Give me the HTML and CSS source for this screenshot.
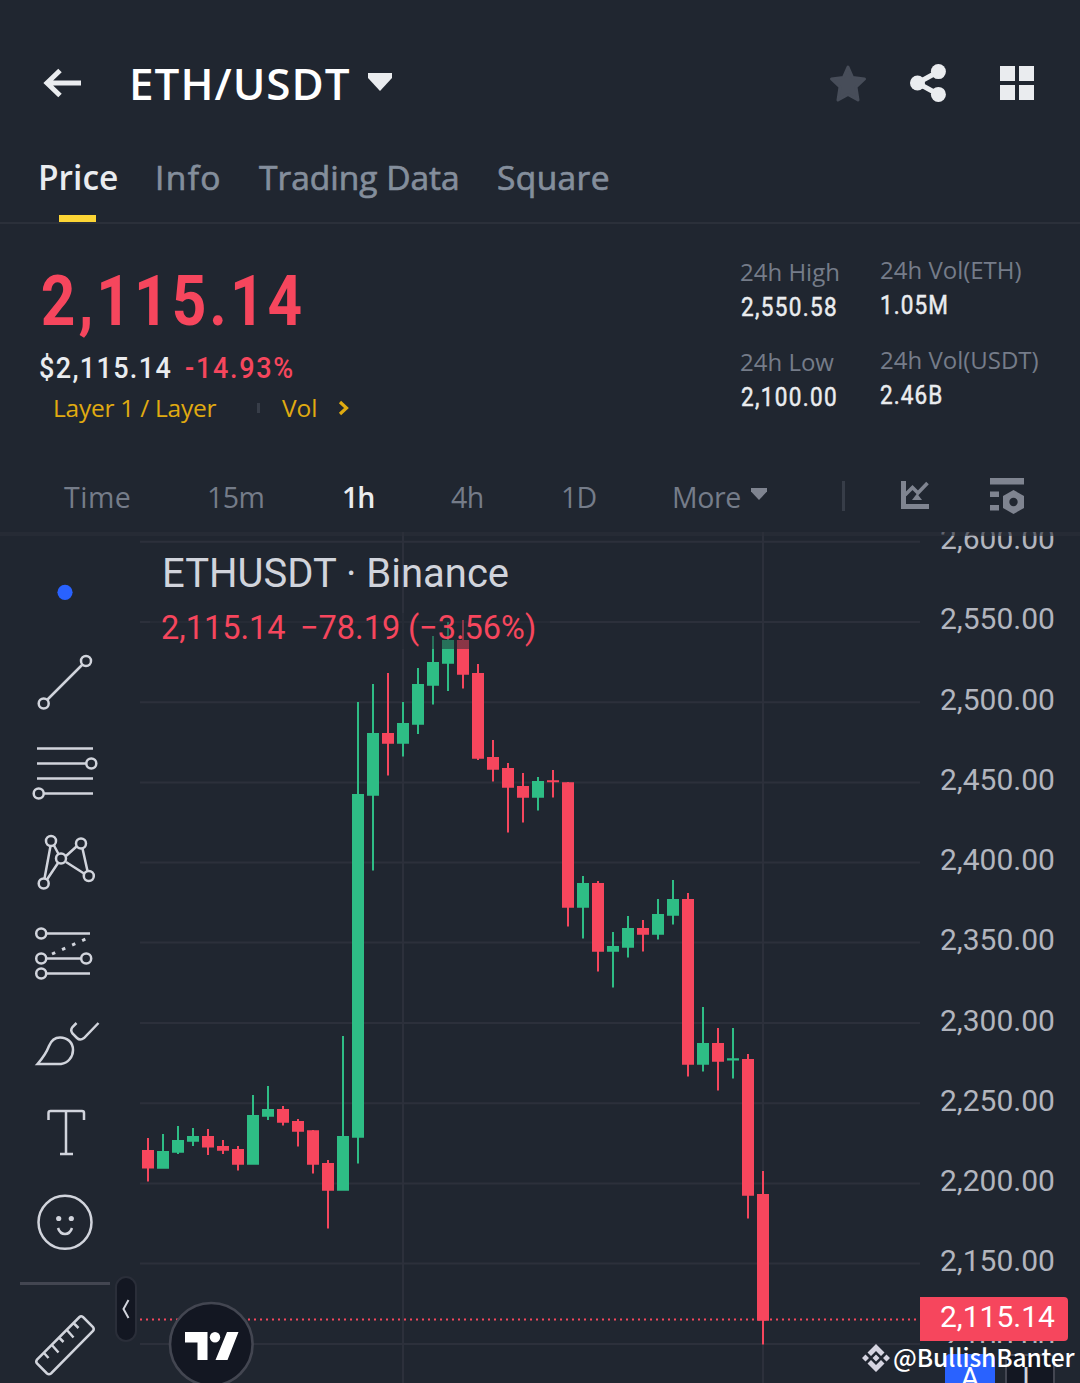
FILE: index.html
```html
<!DOCTYPE html>
<html lang="en">
<head>
<meta charset="utf-8">
<title>ETH/USDT</title>
<link rel="stylesheet" href="styles.css">
</head>
<body>
<div class="screen">
  <header class="topbar">
    <svg class="back" width="40" height="32" viewBox="0 0 40 32"><path d="M38 16H4M17 3.500L4 16L17 28.500" fill="none" stroke="#eaecef" stroke-width="5"/></svg>
    <h1 class="pair">ETH/USDT</h1>
    <svg class="pair-caret" width="24" height="18" viewBox="0 0 24 18"><path d="M0 0H24V5L12 18L0 5Z" fill="#eaecef"/></svg>
    <svg class="star" width="38" height="40" viewBox="0 0 38 40"><path d="M19 3L23.600 13.500L35.500 15L27 23L29 36L19 30.500L9 36L11 23L2.500 15L14.400 13.500Z" fill="#474d59" stroke="#474d59" stroke-width="3" stroke-linejoin="round"/></svg>
    <svg class="share" width="36" height="38" viewBox="0 0 36 38"><path d="M28.500 7.500L7.500 19L28.500 30.500" fill="none" stroke="#eaecef" stroke-width="5"/><g fill="#eaecef"><circle cx="28.400" cy="7.600" r="7.500"/><circle cx="7.500" cy="19" r="7.500"/><circle cx="28.400" cy="30.400" r="7.500"/></g></svg>
    <svg class="grid-icon" width="34" height="34" viewBox="0 0 34 34"><path d="M0 0H15V15H0ZM19 0H34V15H19ZM0 19H15V34H0ZM19 19H34V34H19Z" fill="#eaecef"/></svg>
  </header>

  <nav class="tabs">
    <a class="tab tab-price active">Price</a>
    <a class="tab tab-info">Info</a>
    <a class="tab tab-data">Trading Data</a>
    <a class="tab tab-square">Square</a>
  </nav>

  <section class="summary">
    <div class="quote">
      <div class="last">2,115.14</div>
      <div class="fiat"><span class="usd">$2,115.14</span><span class="change">-14.93%</span></div>
      <div class="tags">
        <span class="tag-layer">Layer 1 / Layer</span><i class="tag-split"></i><span class="tag-vol">Vol</span>
        <svg width="11" height="16" viewBox="0 0 11 16"><path d="M2 2L8.500 8L2 14" fill="none" stroke="#e0ab10" stroke-width="3.200"/></svg>
      </div>
    </div>
    <dl class="stats stats-range">
      <dt class="l-high">24h High</dt><dd>2,550.58</dd>
      <dt class="l-low">24h Low</dt><dd>2,100.00</dd>
    </dl>
    <dl class="stats stats-vol">
      <dt class="l-eth">24h Vol(ETH)</dt><dd>1.05M</dd>
      <dt class="l-usdt">24h Vol(USDT)</dt><dd>2.46B</dd>
    </dl>
  </section>

  <nav class="intervals">
    <span class="iv iv-time">Time</span>
    <span class="iv iv-15">15m</span>
    <span class="iv iv-1h active">1h</span>
    <span class="iv iv-4h">4h</span>
    <span class="iv iv-1d">1D</span>
    <span class="iv iv-more">More</span>
    <svg class="more-caret" width="16" height="12" viewBox="0 0 16 12"><path d="M0 0H16V3.500L8 12L0 3.500Z" fill="#7f8490"/></svg>
    <i class="iv-split"></i>
    <svg class="chart-icon" width="28" height="28" viewBox="0 0 28 28"><path d="M2.500 0V25.500H28" fill="none" stroke="#7f8490" stroke-width="5"/><path d="M4 14L11.500 6.500L17 12L26.500 2" fill="none" stroke="#7f8490" stroke-width="3.600"/><path d="M16 12.500L21 19H11Z" fill="#7f8490"/></svg>
    <svg class="settings-icon" width="36" height="36" viewBox="0 0 36 36"><path d="M1 0H35V6.500H1ZM1 13.500H10V19H1ZM1 27H10V32.500H1Z" fill="#7f8490"/><path d="M24.500 12L35 18V30L24.500 36L14 30V18Z" fill="#7f8490"/><circle cx="24.500" cy="24" r="4.200" fill="#202630"/></svg>
  </nav>

  <main class="chart">
    <aside class="tools">
      <svg class="tool" viewBox="0 547 140 90"><circle cx="65" cy="592.300" r="7.600" fill="#2962ff"/></svg>
      <svg class="tool" viewBox="0 637 140 90"><path d="M47.500 699.500L82.500 664.500"/><circle cx="86" cy="661" r="5"/><circle cx="43.700" cy="703.500" r="5"/></svg>
      <svg class="tool" viewBox="0 727 140 90"><path d="M37 748.500H93M37 763.500H86M37 778.500H93M44 793.500H93"/><circle cx="91.300" cy="763.500" r="5"/><circle cx="38.700" cy="793.500" r="5"/></svg>
      <svg class="tool" viewBox="0 817 140 90"><path d="M50.500 846L44.500 878.500M47 879.500L58 863M54 845.500L58.500 854M66 856L76.500 846.500M66 862L84 873.500M82.500 848.500L87.500 871"/><circle cx="51" cy="841" r="5"/><circle cx="81" cy="843.500" r="5"/><circle cx="61" cy="858.500" r="5"/><circle cx="43.700" cy="883.500" r="5"/><circle cx="88.800" cy="876" r="5"/></svg>
      <svg class="tool" viewBox="0 907 140 90"><path d="M46 933.500H90M46 958.500H81M46 973.500H90"/><path d="M52 954L88 938" stroke-width="3" stroke-dasharray="3.500 7.500"/><circle cx="41.200" cy="933.500" r="5"/><circle cx="41.200" cy="958.500" r="5"/><circle cx="86.200" cy="958.500" r="5"/><circle cx="41.200" cy="973.500" r="5"/></svg>
      <svg class="tool" viewBox="0 997 140 90"><path d="M37.500 1064H61C68 1063 73 1057 73 1050C73 1042 67 1037.500 60 1037.500C54 1037.500 51 1041 49 1046C46 1054 41 1060 37.500 1064ZM76.500 1023L72.500 1027Q70 1030 72.500 1033.500L77 1038Q80 1041 84 1038L98.500 1023"/></svg>
      <svg class="tool" viewBox="0 1087 140 90"><path d="M48.500 1120V1113Q48.500 1111 50.500 1111H82Q84 1111 84 1113V1120M66 1111V1154M60 1154H73"/></svg>
      <svg class="tool" viewBox="0 1177 140 90"><circle cx="65" cy="1222.300" r="26.500"/><path d="M58 1228Q60 1234 65 1234Q70 1234 72 1228"/><circle class="dot" cx="58.700" cy="1218.500" r="2.600"/><circle class="dot" cx="71.300" cy="1218.500" r="2.600"/></svg>
      <i class="tools-rule"></i>
      <svg class="tool tool-last" viewBox="0 1300 140 83"><path d="M79.500 1317L37 1359.500Q35.500 1361.500 37 1363.500L47 1373.500Q49 1375 51 1373.500L93 1331Q94.500 1329 93 1327L83 1317Q81 1315.500 79.500 1317ZM73.500 1323L78.500 1328M66 1329L73.500 1337.500M58.500 1337L63.500 1342M51 1344L58.500 1352.500M44 1353L48.500 1358"/></svg>
    </aside>

    <div class="plot">
      <svg class="candles" width="780" height="851" viewBox="140 532 780 851">
        <path class="grid" d="M140 541.700H920M140 621.900H920M140 702.200H920M140 782.400H920M140 862.600H920M140 942.600H920M140 1023H920M140 1103.300H920M140 1183.500H920M140 1263.500H920M140 1343.900H920"/>
        <path class="grid grid-v" d="M403 532V1383M763 532V1383"/>
        <path class="last-line" d="M140 1319.500H920"/>
        <g class="up">
          <path class="wick" d="M163 1134V1152M178 1126V1154M193 1128V1146M253 1095V1117M268 1086V1120M343 1036V1140M358 702V1163.500M373 684V870.500M403 702V756.500M418 668V734M433 636V704.500M448 622V691M538 777V810.500M583 876V938.500M613 932V987.500M628 916V957.500M658 899V939.500M673 880V924.500M703 1007V1071.500M733 1028V1078.500"/>
          <path class="body" d="M163 1151V1168.700M178 1140V1152.700M193 1136V1141.700M253 1115V1164.700M268 1109V1116.700M343 1136V1190.700M358 794V1137.700M373 733V795.700M403 723V743.700M418 684V724.700M433 662V685.700M448 640V663.700M538 781V797.700M583 883V907.700M613 946V951.700M628 928V947.700M658 914V934.700M673 899V915.700M703 1043V1064.700M733 1058.300V1060.500"/>
        </g>
        <g class="down">
          <path class="wick" d="M148 1138V1181.500M208 1129V1155M223 1140V1154M238 1146V1170.500M283 1106V1125.500M298 1119V1146.500M313 1130V1173.500M328 1160V1228.500M388 673V775.500M463 620V688.500M478 664V760M493 740V781.500M508 763V832.500M523 773V822.500M553 770V797.500M568 782V926.500M598 881V971.500M643 920V951.500M688 893V1076.500M718 1028V1090.500M748 1054V1218.500M763 1171V1344.500"/>
          <path class="body" d="M148 1150V1168.500M208 1136V1147.500M223 1146V1150.700M238 1149V1164.700M283 1109V1122.700M298 1121V1131.700M313 1130.300V1164.700M328 1163V1190.700M388 733V743.700M463 640V674.700M478 673V758.700M493 757V769.700M508 768V787.700M523 786V797.700M553 780.300V782.300M568 782.300V907.700M598 883V951.700M643 928V934.700M688 899V1064.700M718 1043V1061.700M748 1059V1195.700M763 1194V1320.700"/>
        </g>
      </svg>
      <div class="legend">
        <div class="legend-name">ETHUSDT · Binance</div>
        <div class="legend-values"><span class="lv1">2,115.14</span><span class="lv2">−78.19</span><span class="lv3">(−3.56%)</span></div>
      </div>
      <svg class="collapse" width="22" height="66" viewBox="0 0 22 66"><rect x="1" y="1" width="20" height="64" rx="10" fill="#131722" stroke="#2a2e39" stroke-width="2"/><path d="M13.500 24L8.500 33L13.500 42" fill="none" stroke="#d1d4dc" stroke-width="2"/></svg>
      <svg class="tv" width="86" height="86" viewBox="168 1301 86 86"><circle cx="211.300" cy="1344.300" r="41.300" fill="#131722" stroke="#434651" stroke-width="2.600"/><path d="M185 1332H207.500V1360H197.500V1342.500H185ZM227 1332H238.500L227.500 1360H215.500Z" fill="#fff"/><circle cx="215" cy="1337.300" r="5.200" fill="#fff"/></svg>
    </div>

    <div class="axis">
      <div class="axis-labels">
        <span>2,600.00</span><span>2,550.00</span><span>2,500.00</span><span>2,450.00</span><span>2,400.00</span><span>2,350.00</span><span>2,300.00</span><span>2,250.00</span><span>2,200.00</span><span>2,150.00</span><span>2,100.00</span>
      </div>
      <div class="axis-buttons"><b class="btn-auto">A</b><b class="btn-log">L</b></div>
      <div class="last-tag">2,115.14</div>
    </div>
    <div class="watermark">
      <svg width="28" height="28" viewBox="0 0 28 28"><path d="M14 0L22.500 8.500L19 12L14 7L9 12L5.500 8.500ZM14 28L22.500 19.500L19 16L14 21L9 16L5.500 19.500ZM3.500 10.500L7 14L3.500 17.500L0 14ZM24.500 10.500L28 14L24.500 17.500L21 14ZM14 10.500L17.500 14L14 17.500L10.500 14Z" fill="#d5d4e0"/></svg>
      <span>@BullishBanter</span>
    </div>
  </main>
</div>
</body>
</html>
```
FILE: styles.css
```css
* { box-sizing: border-box; margin: 0; padding: 0; }

body {
  background: #202630;
  color: #eaecef;
  font-family: "Open Sans", "Noto Sans", sans-serif;
}

svg { display: block; flex: none; }

.screen {
  width: 1080px;
  height: 1383px;
  overflow: hidden;
  display: flex;
  flex-direction: column;
}

/* Title bar */
.topbar {
  flex: none;
  height: 136px;
  padding: 32px 46px 0 43px;
  display: flex;
  align-items: center;
}
.back { margin-right: 46px; position: relative; top: -1px; }
.pair {
  width: 239px;
  margin-top: -2px;
  font-size: 44px;
  line-height: 60px;
  font-weight: 600;
  letter-spacing: 1px;
  color: #fff;
  white-space: nowrap;
}
.pair-caret { position: relative; top: -2px; }
.star { margin-left: auto; }
.share { margin-left: 43px; position: relative; top: -1px; }
.grid-icon { margin-left: 54px; position: relative; top: -1px; }

/* Section tabs */
.tabs {
  flex: none;
  height: 88px;
  padding-left: 38px;
  display: flex;
  border-bottom: 2px solid #2b303a;
}
.tab {
  position: relative;
  font-size: 33.500px;
  line-height: 46px;
  padding-top: 18px;
  color: #848e9c;
  -webkit-text-stroke: .7px #848e9c;
  white-space: nowrap;
}
.tab.active { color: #eaecef; font-weight: 600; -webkit-text-stroke: 0; }
.tab.active::after {
  content: "";
  position: absolute;
  left: 21px;
  bottom: 0;
  width: 37px;
  height: 7px;
  background: #fcd535;
}
.tab-price { width: 117px; }
.tab-info { width: 104px; letter-spacing: 1.400px; }
.tab-data { width: 238px; }
.tab-square { letter-spacing: .4px; }

/* Price summary */
.summary {
  flex: none;
  height: 239px;
  display: flex;
}
.quote { width: 740px; padding-left: 39px; }
.last {
  width: 320px;
  margin-top: 37px;
  padding-left: 2px;
  font: 700 71px/80px Roboto, sans-serif;
  letter-spacing: 3.600px;
  color: #f6465d;
  transform: scaleX(.85);
  transform-origin: left;
}
.fiat {
  margin-top: 7px;
  display: flex;
  font: 500 30px/40px Roboto, sans-serif;
}
.usd { width: 146px; white-space: nowrap; letter-spacing: 1.500px; transform: scaleX(.9); transform-origin: left; }
.change { color: #f6465d; letter-spacing: 1.900px; transform: scaleX(.9); transform-origin: left; }
.tags {
  display: flex;
  align-items: center;
  padding-left: 14px;
  font-size: 24.500px;
  line-height: 40px;
  color: #e0ab10;
}
.tag-layer { width: 204px; white-space: nowrap; letter-spacing: -.25px; }
.tag-split { width: 3px; height: 10px; background: #373d48; margin-right: 22px; }
.tag-vol { width: 56px; }

.stats { padding-top: 29px; white-space: nowrap; }
.stats-range { width: 140px; padding-top: 31px; }
.stats dt { font-size: 24px; line-height: 34px; color: #757c89; }
.stats dd {
  font: 400 25px/36px Roboto, sans-serif;
  -webkit-text-stroke: .5px #eaecef;
  letter-spacing: 1.500px;
  margin: 1px 0 19px 1px;
  transform: scaleX(.9);
  transform-origin: left;
}
.stats-vol dd { letter-spacing: 1.200px; margin-left: 0; }

/* Interval picker */
.intervals {
  flex: none;
  height: 69px;
  padding: 0 55px 4px 64px;
  display: flex;
  align-items: center;
  font-size: 28.500px;
  line-height: 40px;
  color: #757c89;
}
.iv { flex: none; white-space: nowrap; position: relative; top: 1px; }
.iv.active { color: #eaecef; font-weight: 600; letter-spacing: -1px; }
.iv-time { width: 143px; letter-spacing: .5px; }
.iv-15 { width: 135px; letter-spacing: -.5px; }
.iv-1h { width: 109px; }
.iv-4h { width: 110px; letter-spacing: -.5px; }
.iv-1d { width: 111px; letter-spacing: -.8px; }
.iv-more { width: 79px; letter-spacing: -.4px; }
.more-caret { position: relative; top: -2px; }
.iv-split { width: 3px; height: 30px; background: #373d48; margin-left: 75px; }
.chart-icon { margin-left: 56px; position: relative; top: -1px; }
.settings-icon { margin-left: 60px; }

/* Chart */
.chart {
  position: relative;
  flex: none;
  height: 851px;
  display: flex;
}
.chart::before {
  content: "";
  position: absolute;
  inset: 0 0 auto 0;
  height: 4px;
  background: rgba(43, 47, 57, .6);
  z-index: 2;
}
.tools { width: 140px; padding-top: 15px; flex: none; }
.tool { width: 140px; height: 90px; fill: none; stroke: #d1d4dc; stroke-width: 2.500; }
.tool:first-child { stroke: none; }
.tool .dot { fill: #d1d4dc; stroke: none; }
.tool-last { height: 83px; }
.tools-rule { display: block; width: 90px; height: 3px; margin: 15px 0 15px 20px; background: #434651; }

.plot { position: relative; width: 780px; flex: none; }
.grid { stroke: #2c303b; stroke-width: 2; fill: none; }
.wick { stroke-width: 2; }
.body { stroke-width: 12; }
.up { stroke: #2ebd85; }
.down { stroke: #f6465d; }
.last-line { stroke: #f6465d; stroke-width: 2; stroke-dasharray: 2 4; }
.legend {
  position: absolute;
  left: 10px;
  top: 11px;
  width: 400px;
  height: 106px;
  padding: 4px 0 0 12px;
  font-family: Roboto, sans-serif;
  white-space: nowrap;
  background: linear-gradient(rgba(32, 38, 48, .5), rgba(32, 38, 48, .5)) 0 100% / 100% 36px no-repeat;
}
.legend-name { font-size: 40px; line-height: 54px; color: #d1d4dc; }
.legend-values { display: flex; margin-left: -1px; font-size: 32.500px; line-height: 54px; color: #f6465d; }
.lv1 { width: 139px; }
.lv2 { width: 108px; }
.collapse { position: absolute; left: -25px; top: 744px; }
.tv { position: absolute; left: 28px; top: 769px; }

.axis {
  position: relative;
  width: 160px;
  font-family: Roboto, sans-serif;
}
.axis-labels {
  height: 811px;
  overflow: hidden;
  font-size: 30px;
  color: #b2b5be;
}
.axis-labels span {
  display: block;
  height: 80.250px;
  line-height: 40px;
  padding-left: 20px;
  position: relative;
  top: -12.800px;
}
.axis-buttons { display: flex; gap: 10px; padding: 11px 0 0 25px; }
.axis-buttons b {
  width: 50px;
  height: 50px;
  border-radius: 5px 5px 0 0;
  font-size: 29px;
  line-height: 49px;
  font-weight: 400;
  text-align: center;
}
.btn-auto { background: #2962ff; color: #fff; }
.axis-buttons .btn-log { background: #131722; color: #d1d4dc; border: 2px solid #434651; line-height: 45px; }
.last-tag {
  position: absolute;
  left: 0;
  top: 765px;
  width: 148px;
  height: 44px;
  border-radius: 0 4px 4px 0;
  padding-left: 20px;
  background: #f6465d;
  color: #fff;
  font-size: 30px;
  line-height: 40px;
}
.watermark {
  position: absolute;
  left: 862px;
  top: 809px;
  display: flex;
  align-items: center;
  gap: 3px;
  font: 500 24.500px/36px "Noto Sans CJK SC", sans-serif;
  letter-spacing: -.1px;
  color: #fff;
  white-space: nowrap;
}
.watermark span { margin-top: -2px; }
```
